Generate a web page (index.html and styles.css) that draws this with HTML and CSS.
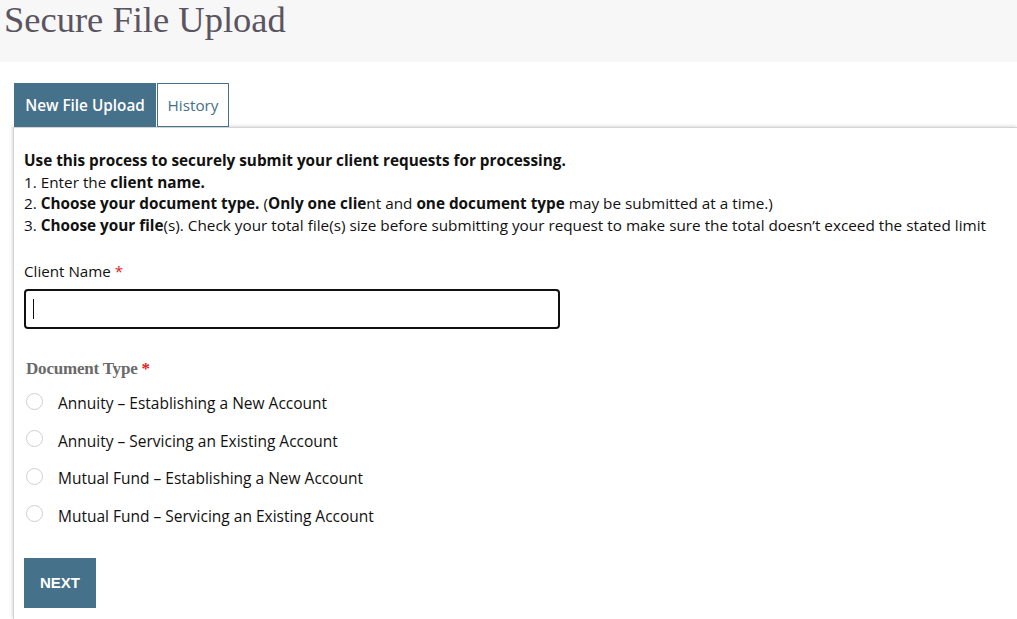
FILE: index.html
```html
<!DOCTYPE html>
<html lang="en">
<head>
    <meta charset="UTF-8">
    <meta name="viewport" content="width=device-width, initial-scale=1.0">
    <title>Secure File Upload</title>
    <link rel="stylesheet" href="styles.css">
</head>
<body>
    <div class="page-header">
        <h1>Secure File Upload</h1>
    </div>

    <div class="tabs">
        <button class="tab active">New File Upload</button>
        <button class="tab">History</button>
    </div>

    <div class="panel">
        <div class="intro">
            <div><b>Use this process to securely submit your client requests for processing.</b></div>
            <div>1. Enter the <b>client name.</b></div>
            <div>2. <b>Choose your document type.</b> (<b>Only one clie</b>nt and <b>one document type</b> may be submitted at a time.)</div>
            <div>3. <b>Choose your file</b>(s). Check your total file(s) size before submitting your request to make sure the total doesn’t exceed the stated limit</div>
        </div>

        <form class="upload-form">
            <label class="field-label" for="clientName">Client Name <span class="req">*</span></label>
            <div class="input-box"><span class="caret"></span></div>

            <div class="doc-label">Document Type <span class="req">*</span></div>
            <div class="radio-list">
                <label class="radio-row"><span class="radio"></span>Annuity – Establishing a New Account</label>
                <label class="radio-row"><span class="radio"></span>Annuity – Servicing an Existing Account</label>
                <label class="radio-row"><span class="radio"></span>Mutual Fund – Establishing a New Account</label>
                <label class="radio-row"><span class="radio"></span>Mutual Fund – Servicing an Existing Account</label>
            </div>

            <button type="button" class="next-button">NEXT</button>
        </form>
    </div>
</body>
</html>
```

FILE: styles.css
```css
body {
    margin: 0;
    font-family: "Open Sans", Lato, sans-serif;
    color: #111;
    background-color: #fff;
    overflow: hidden;
}
.page-header {
    background-color: #f7f7f7;
    height: 62px;
    padding: 1px 4px 0;
    box-sizing: border-box;
}
.page-header h1 {
    margin: 0;
    font-family: "Liberation Serif", serif;
    font-weight: normal;
    font-size: 36.5px;
    line-height: 38px;
    color: #5a5560;
}
.tabs {
    display: flex;
    gap: 1px;
    margin-top: 21px;
    padding-left: 14px;
}
.tab {
    height: 44px;
    width: 72px;
    border: 1px solid #46718a;
    background-color: #fff;
    color: #46718a;
    font-family: "Open Sans", sans-serif;
    font-size: 15.3px;
    padding: 0;
    cursor: pointer;
}
.tab.active {
    background-color: #46718a;
    color: #fff;
    font-weight: 600;
    width: 142px;
}
.panel {
    margin-left: 13px;
    padding: 22px 0 11px 10px;
    border-top: 1px solid #d4d4d4;
    border-left: 1px solid #d4d4d4;
    box-shadow: -1px -1px 3px rgba(0, 0, 0, 0.15);
}
.intro {
    font-size: 15.3px;
    line-height: 21.6px;
}
.upload-form {
    display: flex;
    flex-direction: column;
    align-items: flex-start;
}
.field-label {
    margin-top: 25px;
    font-size: 15.2px;
    line-height: 20px;
}
.req {
    color: #e02020;
}
.input-box {
    margin-top: 8px;
    width: 536px;
    height: 40px;
    box-sizing: border-box;
    border: 2px solid #111;
    border-radius: 4px;
    display: flex;
    align-items: center;
    padding-left: 7px;
}
.caret {
    width: 1px;
    height: 20px;
    background-color: #111;
}
.doc-label {
    margin-top: 30px;
    margin-left: 2px;
    font-family: "Liberation Serif", serif;
    font-weight: bold;
    font-size: 17px;
    line-height: 20px;
    color: #6a6a6a;
    letter-spacing: -0.2px;
}
.radio-list {
    display: flex;
    flex-direction: column;
    gap: 15.5px;
    margin-top: 13px;
}
.radio-row {
    display: flex;
    align-items: center;
    gap: 15px;
    font-size: 15.5px;
    line-height: 22px;
    margin-left: 2px;
}
.radio {
    width: 17px;
    height: 17px;
    box-sizing: border-box;
    border: 1.5px solid #cfcfcf;
    border-radius: 50%;
    margin-top: -4px;
}
.next-button {
    margin-top: 31px;
    width: 72px;
    height: 50px;
    border: none;
    background-color: #46718a;
    color: #fff;
    font-family: "Liberation Sans", Arial, sans-serif;
    font-weight: bold;
    font-size: 15px;
    cursor: pointer;
}
```
